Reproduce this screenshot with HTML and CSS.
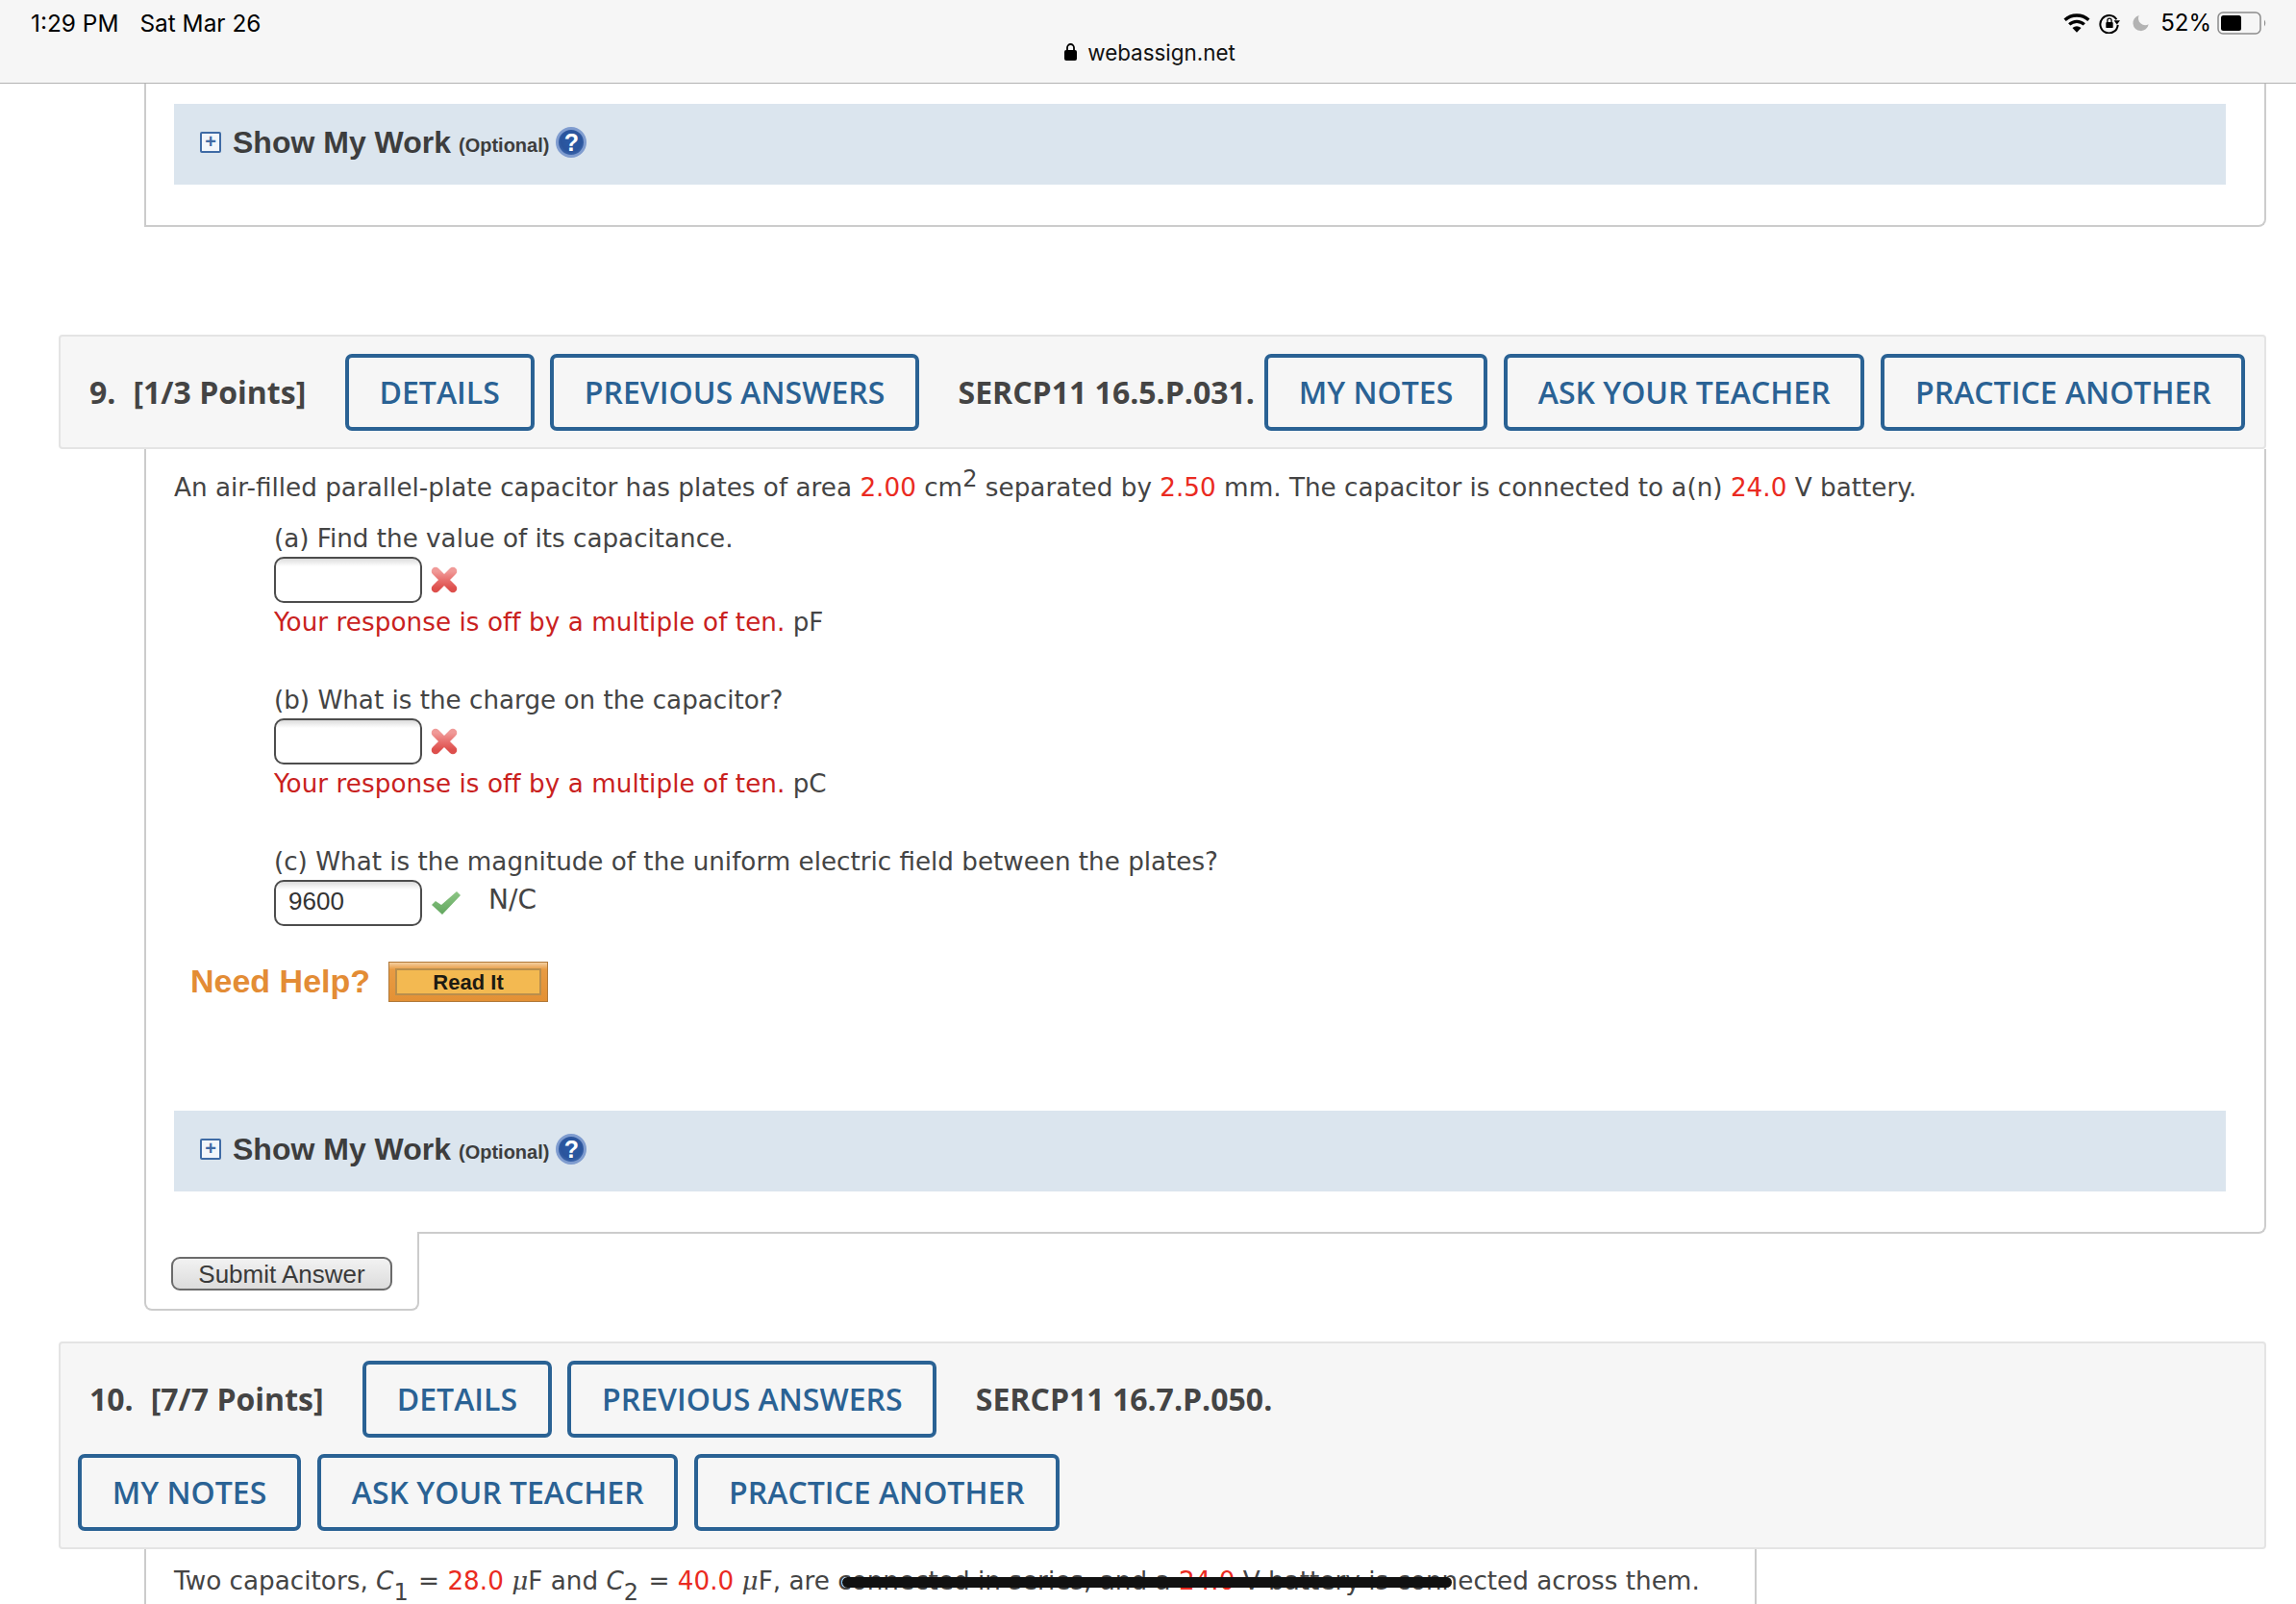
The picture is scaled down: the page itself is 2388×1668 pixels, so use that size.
FILE: index.html
```html
<!DOCTYPE html>
<html lang="en">
<head>
<meta charset="utf-8">
<title>WebAssign</title>
<link rel="stylesheet" href="styles.css">
</head>
<body>
<svg class="defs" width="0" height="0" aria-hidden="true">
  <defs>
    <linearGradient id="xgrad" x1="0" y1="0" x2="0" y2="1"><stop offset="0" stop-color="#f09a98"/><stop offset=".5" stop-color="#e8706e"/><stop offset="1" stop-color="#dd4f4c"/></linearGradient>
    <linearGradient id="cgrad" x1="0" y1="0" x2="0" y2="1"><stop offset="0" stop-color="#8dc685"/><stop offset="1" stop-color="#62a75f"/></linearGradient>
  </defs>
</svg>
<header class="browser">
  <div class="status">
    <div class="clock"><span>1:29 PM</span><span>Sat Mar 26</span></div>
    <div class="indicators">
      <svg class="i-wifi" width="28" height="22" viewBox="0 0 30 24"><path d="M1.500 8.500C9 1.500 21 1.500 28.500 8.500" fill="none" stroke="#000" stroke-width="3.600"/><path d="M6.500 13.500C11.500 9 18.500 9 23.500 13.500" fill="none" stroke="#000" stroke-width="3.600"/><path d="M10 17.500Q15 13.500 20 17.500L15 22.500Z" fill="#000"/></svg>
      <svg class="i-lock" width="22" height="22" viewBox="0 0 24 24"><path d="M20 8A10 10 0 1 0 21.500 14" fill="none" stroke="#000" stroke-width="2.200"/><path d="M17 9H24L20.500 13.500Z" fill="#000"/><rect x="8" y="11" width="8" height="6.500" rx="1" fill="#000"/><path d="M9.700 11V9a2.300 2.300 0 0 1 4.600 0v2" fill="none" stroke="#000" stroke-width="1.400"/></svg>
      <svg class="i-moon" width="19" height="20" viewBox="0 0 20 22"><path d="M8 2.200A9 9 0 1 0 19 12.500A8 8 0 0 1 8 2.200Z" fill="#b3b3b3"/></svg>
      <span class="pct">52%</span>
      <svg class="i-batt" width="52" height="24" viewBox="0 0 52 24"><rect x="1" y="1" width="44" height="22" rx="5" fill="none" stroke="#8c8c8c" stroke-width="1.500"/><rect x="4" y="4" width="21" height="16" rx="2.500" fill="#000"/><path d="M49 8.500Q51.500 12 49 15.500Z" fill="#8c8c8c"/></svg>
    </div>
  </div>
  <div class="url">
    <svg width="13" height="18" viewBox="0 0 13 18"><rect x="0" y="7" width="13" height="11" rx="2" fill="#000"/><path d="M3 8V4.500a3.500 3.500 0 0 1 7 0V8" fill="none" stroke="#000" stroke-width="1.800"/></svg>
    <span>webassign.net</span>
  </div>
</header>

<main class="page">
  <section class="body body-top">
    <div class="work">
      <span class="plus">+</span><span class="work-title">Show My Work</span><span class="work-opt">(Optional)</span><span class="help">?</span>
    </div>
  </section>

  <section class="qhead">
    <h2 class="qtitle"><span class="qnum">9.</span><span>[1/3 Points]</span></h2>
    <a class="btn">DETAILS</a>
    <a class="btn">PREVIOUS ANSWERS</a>
    <span class="code">SERCP11 16.5.P.031.</span>
    <div class="extra">
      <a class="btn">MY NOTES</a>
      <a class="btn">ASK YOUR TEACHER</a>
      <a class="btn">PRACTICE ANOTHER</a>
    </div>
  </section>

  <section class="body body-q9">
    <p class="intro">An air-filled parallel-plate capacitor has plates of area <em class="num">2.00</em> cm<sup>2</sup> separated by <em class="num">2.50</em> mm. The capacitor is connected to a(n) <em class="num">24.0</em> V battery.</p>

    <div class="part">
      <p class="line">(a) Find the value of its capacitance.</p>
      <div class="answer"><span class="field"></span><svg class="mark" width="28" height="28" viewBox="0 0 28 28"><path d="M5 5L23 23M23 5L5 23" stroke="url(#xgrad)" stroke-width="8.500" stroke-linecap="round"/></svg></div>
      <p class="line"><span class="wrong">Your response is off by a multiple of ten.</span> pF</p>
    </div>

    <div class="part">
      <p class="line">(b) What is the charge on the capacitor?</p>
      <div class="answer"><span class="field"></span><svg class="mark" width="28" height="28" viewBox="0 0 28 28"><path d="M5 5L23 23M23 5L5 23" stroke="url(#xgrad)" stroke-width="8.500" stroke-linecap="round"/></svg></div>
      <p class="line"><span class="wrong">Your response is off by a multiple of ten.</span> pC</p>
    </div>

    <div class="part">
      <p class="line">(c) What is the magnitude of the uniform electric field between the plates?</p>
      <div class="answer"><span class="field">9600</span><svg class="mark" width="32" height="26" viewBox="0 0 32 26"><path d="M1 15L5 11L11 15L27 1L31 5L12 25Z" fill="url(#cgrad)"/></svg><span class="unit">N/C</span></div>
    </div>

    <div class="need">
      <span class="need-text">Need Help?</span>
      <span class="readit"><span>Read It</span></span>
    </div>

    <div class="work work-q9">
      <span class="plus">+</span><span class="work-title">Show My Work</span><span class="work-opt">(Optional)</span><span class="help">?</span>
    </div>
  </section>
  <div class="submit-tab"><button class="submit" type="button">Submit Answer</button></div>

  <section class="qhead qhead-10">
    <h2 class="qtitle"><span class="qnum">10.</span><span>[7/7 Points]</span></h2>
    <a class="btn">DETAILS</a>
    <a class="btn">PREVIOUS ANSWERS</a>
    <span class="code">SERCP11 16.7.P.050.</span>
    <div class="extra">
      <a class="btn">MY NOTES</a>
      <a class="btn">ASK YOUR TEACHER</a>
      <a class="btn">PRACTICE ANOTHER</a>
    </div>
  </section>

  <section class="body body-q10">
    <p class="intro">Two capacitors, <i class="var">C</i><sub>1</sub> = <em class="num">28.0</em> <i class="mu">μ</i>F and <i class="var">C</i><sub>2</sub> = <em class="num">40.0</em> <i class="mu">μ</i>F, are c<span class="scribbled">onnected in series, and a <em class="num">24.0</em> V battery is conn</span>ected across them.</p>
  </section>
</main>
</body>
</html>
```
FILE: styles.css
```css
* { box-sizing: border-box; }
html, body { margin: 0; padding: 0; }
body {
  width: 2388px;
  height: 1668px;
  overflow: hidden;
  background: #fff;
  color: #444;
  font-family: "DejaVu Sans", Verdana, sans-serif;
}
p, h2 { margin: 0; }
em { font-style: normal; }
.defs { position: absolute; }

/* browser chrome */
.browser {
  height: 87px;
  background: #f6f6f6;
  border-bottom: 1px solid #b3b3b3;
  font-family: Inter, "Liberation Sans", sans-serif;
  color: #000;
}
.status {
  height: 41px;
  padding: 6px 30px 0 32px;
  display: flex;
  justify-content: space-between;
  align-items: center;
}
.clock { display: flex; gap: 22px; font-size: 24.400px; }
.indicators { display: flex; align-items: center; font-size: 24px; }
.i-wifi { margin-right: 9px; }
.i-lock { margin-right: 12px; }
.i-moon { margin-right: 11px; }
.pct { margin-right: 6px; }
.url {
  display: flex;
  justify-content: center;
  align-items: center;
  gap: 11px;
  height: 26px;
  font-size: 22.400px;
  color: #111;
  padding-left: 4px;
}

/* question body */
.body {
  margin: 0 31px 0 150px;
  border: 2px solid #ccc;
  border-top: 0;
  padding: 0 40px 0 29px;
  background: #fff;
}
.body-top {
  height: 149px;
  padding-top: 21px;
  border-radius: 0 0 8px 0;
  margin-bottom: 112px;
}
.body-q9 {
  height: 816px;
  padding-top: 20px;
  border-radius: 0 0 8px 0;
}
.body-q10 {
  margin-right: 561px;
  height: 70px;
  border-bottom: 0;
  padding-top: 13px;
}

.work {
  height: 84px;
  background: #dbe5ee;
  display: flex;
  align-items: center;
  padding-left: 27px;
  padding-bottom: 4px;
  color: #3d3d3d;
  font-family: "Liberation Sans", Arial, sans-serif;
  font-weight: 700;
}
.work-q9 { margin-top: 113px; }
.plus {
  width: 22px;
  height: 22px;
  border: 2px solid #3f6ba5;
  border-radius: 2px;
  background: #f2f6fb;
  color: #3f6ba5;
  font-size: 20px;
  line-height: 17px;
  text-align: center;
  margin-right: 12px;
}
.work-title { font-size: 32px; margin-right: 8px; }
.work-opt { font-size: 20px; margin: 6px 7px 0 0; }
.help {
  width: 32px;
  height: 32px;
  border-radius: 50%;
  border: 3px solid #7f9ccf;
  background: radial-gradient(circle at 50% 45%, #2a5aa6 0%, #2a549c 55%, #4f78bc 100%);
  color: #fff;
  font-size: 25px;
  line-height: 26px;
  text-align: center;
}

/* question header */
.qhead {
  margin: 0 31px 0 61px;
  padding: 18px 10px 17px 18px;
  background: #f6f6f6;
  border: 2px solid #e4e4e4;
  border-radius: 4px;
  display: flex;
  flex-wrap: wrap;
  align-items: center;
  row-gap: 17px;
  font-family: "Open Sans", "Liberation Sans", sans-serif;
}
.qhead-10 { margin-top: 32px; }
.qtitle {
  display: flex;
  gap: 18px;
  margin: 0 40.500px 0 12px;
  padding-bottom: 2px;
  font-size: 32px;
  font-weight: 700;
  color: #444;
  white-space: nowrap;
}
.btn {
  height: 80px;
  padding: 0 31.750px 2px;
  margin-right: 16.500px;
  border: 4px solid #2a6294;
  border-radius: 7px;
  display: flex;
  align-items: center;
  font-size: 32px;
  font-weight: 600;
  color: #2a6294;
  white-space: nowrap;
}
.code {
  margin: 0 10px 0 24px;
  padding-bottom: 2px;
  font-size: 32px;
  font-weight: 700;
  color: #444;
  white-space: nowrap;
}
.extra { display: flex; }
.extra .btn { margin-right: 17px; }
.extra .btn:last-child { margin-right: 0; }

/* text */
.intro {
  font-size: 26.250px;
  line-height: 40px;
  white-space: nowrap;
}
.num { color: #ea2a21; }
sup { font-size: 24px; line-height: 0; }
sub { font-size: 24px; line-height: 0; vertical-align: -11px; margin-right: 2px; }
.var { font-family: "DejaVu Sans", sans-serif; }
.mu { font-family: "DejaVu Serif", serif; }
.scribbled { position: relative; }
.scribbled::after {
  content: "";
  position: absolute;
  left: -10px;
  right: 6px;
  top: 11px;
  height: 11px;
  background: #111;
  border-radius: 6px;
}

.part { margin: 13px 0 41px 104px; }
.part + .part { margin-top: 0; }
.line { font-size: 26.200px; line-height: 40px; height: 40px; white-space: nowrap; }
.wrong { color: #c9211e; letter-spacing: .07px; }
.answer { display: flex; align-items: center; height: 48px; margin-top: -1px; }
.field {
  width: 154px;
  height: 48px;
  border: 2.500px solid #4d4d4d;
  border-radius: 10px;
  background: linear-gradient(#dcdcdc 0, #fff 8px);
  padding-left: 13px;
  font-family: "Liberation Sans", Arial, sans-serif;
  font-size: 26px;
  line-height: 40px;
  color: #333;
}
.mark { margin-left: 9px; }
.unit { margin-left: 28px; font-size: 28px; margin-top: -8px; }

.need {
  display: flex;
  align-items: center;
  height: 42px;
  margin: -4px 0 0 17px;
  font-family: "Liberation Sans", Arial, sans-serif;
  font-weight: 700;
}
.need-text { font-size: 34px; color: #e38c35; margin: -2px 19px 0 0; }
.readit {
  width: 166px;
  height: 42px;
  padding: 6px;
  background: linear-gradient(#f4cfa0 0, #e89b43 18%, #e39135 100%);
  border: 1px solid #b0793a;
  display: flex;
}
.readit span {
  flex: 1;
  background: #f3b951;
  border: 2px solid #b98e4c;
  color: #1c1a12;
  font-size: 22px;
  line-height: 25px;
  text-align: center;
}

.submit-tab {
  width: 286px;
  height: 82px;
  margin: -2px 0 0 150px;
  padding: 26px 0 0 26px;
  position: relative;
  background: #fff;
  border: 2px solid #ccc;
  border-top: 0;
  border-radius: 0 0 8px 8px;
}
.submit {
  display: block;
  width: 230px;
  height: 35px;
  padding: 0;
  border: 2px solid #6b6b6b;
  border-radius: 9px;
  background: linear-gradient(#f2f2f2, #dcdcdc);
  color: #3a3a3a;
  font-family: "Liberation Sans", Arial, sans-serif;
  font-size: 26px;
  line-height: 30px;
}
```
